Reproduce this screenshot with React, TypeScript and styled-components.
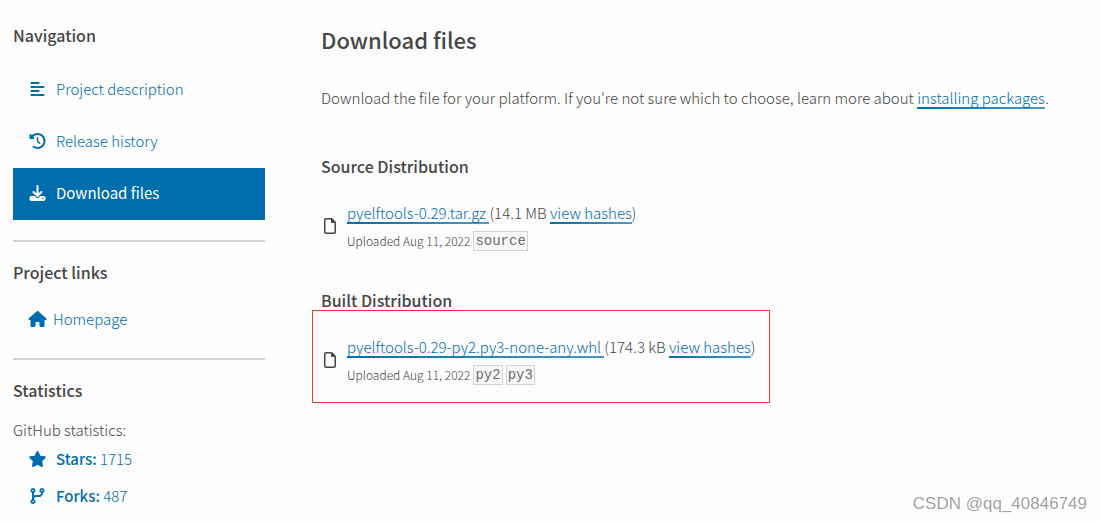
import React from "react";
import styled, { createGlobalStyle, css } from "styled-components";
import {
  FaAlignLeft,
  FaClockRotateLeft,
  FaCodeBranch,
  FaDownload,
  FaHouse,
  FaRegFile,
  FaStar,
} from "react-icons/fa6";

const blue = "#006dad";
const text = "#464646";
const rule = "#d3d3d3";

const GlobalStyle = createGlobalStyle`
  *, *::before, *::after { box-sizing: border-box; }
  body {
    margin: 0;
    background: #fdfdfd;
    color: ${text};
    font-family: "Noto Sans CJK SC", "Open Sans", sans-serif;
    font-size: 15px;
    font-weight: 300;
    line-height: 22px;
  }
  h1, h2, h3, p, ul { margin: 0; padding: 0; }
  ul { list-style: none; }
`;

const Page = styled.div`
  display: grid;
  grid-template-columns: 252px minmax(0, 1fr);
  column-gap: 56px;
  padding: 0 13px;
`;

const Sidebar = styled.aside`
  padding-top: 5px;
`;

const SidebarSection = styled.section`
  padding: 18px 0 20px;

  & + & {
    border-top: 2px solid ${rule};
  }
`;

const SidebarTitle = styled.h2`
  margin-bottom: 17px;
  font-size: 16px;
  font-weight: 500;
  line-height: 24px;
`;

const SidebarLink = styled.a<{ $tall?: boolean; $active?: boolean; $gap?: number }>`
  display: flex;
  align-items: center;
  gap: ${({ $gap = 9 }) => $gap}px;
  height: ${({ $tall }) => ($tall ? 52 : 37)}px;
  padding: 0 15px 2px;
  color: ${blue};
  text-decoration: none;

  svg {
    flex: none;
    width: 19px;
    height: 16px;
  }

  strong {
    font-weight: 500;
  }

  ${({ $active }) =>
    $active &&
    css`
      background: ${blue};
      color: #fff;
      font-weight: 400;
    `}
`;

const Main = styled.main`
  padding-top: 24px;
`;

const PageTitle = styled.h1`
  margin-bottom: 33px;
  font-size: 22px;
  font-weight: 500;
  line-height: 30px;
`;

const Intro = styled.p`
  margin-bottom: 47px;
`;

const TextLink = styled.a`
  padding-bottom: 1px;
  background: linear-gradient(to right, ${blue}, #4b9bc9) left bottom / 100% 2px no-repeat;
  color: ${blue};
  text-decoration: none;
  white-space: pre;
`;

const Distribution = styled.section`
  margin-bottom: 21px;
`;

const DistributionTitle = styled.h3`
  font-size: 16px;
  font-weight: 500;
  line-height: 20px;
`;

const FileRow = styled.div<{ $marked?: boolean }>`
  display: flex;
  align-items: center;
  gap: 9px;
  width: fit-content;
  margin-left: -9px;
  padding: 22px 14px 13px 9px;
  border: 1px solid ${({ $marked }) => ($marked ? "#f03c3c" : "transparent")};

  > svg {
    flex: none;
    width: 16px;
    height: 16px;
    margin-bottom: 2px;
  }
`;

const FileName = styled.div`
  line-height: 28px;
`;

const FileMeta = styled.div`
  display: flex;
  align-items: center;
  gap: 3px;
  height: 28px;
  font-size: 12px;
`;

const Tag = styled.code`
  padding: 0 1px;
  border: 1px solid ${rule};
  background: #f8f8f8;
  color: #6c6c6c;
  font-family: "Liberation Mono", monospace;
  font-size: 14px;
  font-weight: 400;
  line-height: 18px;
`;

const Watermark = styled.div`
  position: fixed;
  right: 14px;
  bottom: 6px;
  color: #a0a0a0;
  font-family: "Liberation Sans", sans-serif;
  font-size: 17px;
  font-weight: 400;
`;

interface DistributionFile {
  title: string;
  name: string;
  size: string;
  tags: string[];
  marked?: boolean;
}

const files: DistributionFile[] = [
  { title: "Source Distribution", name: "pyelftools-0.29.tar.gz", size: "14.1 MB", tags: ["source"] },
  {
    title: "Built Distribution",
    name: "pyelftools-0.29-py2.py3-none-any.whl",
    size: "174.3 kB",
    tags: ["py2", "py3"],
    marked: true,
  },
];

export default function App() {
  return (
    <>
      <GlobalStyle />
      <Page>
        <Sidebar>
          <SidebarSection>
            <SidebarTitle>Navigation</SidebarTitle>
            <nav aria-label="Project navigation">
              <SidebarLink href="#description" $tall>
                <FaAlignLeft />
                Project description
              </SidebarLink>
              <SidebarLink href="#history" $tall>
                <FaClockRotateLeft />
                Release history
              </SidebarLink>
              <SidebarLink href="#files" $tall $active aria-current="page">
                <FaDownload />
                Download files
              </SidebarLink>
            </nav>
          </SidebarSection>
          <SidebarSection>
            <SidebarTitle>Project links</SidebarTitle>
            <SidebarLink href="#homepage" $gap={6}>
              <FaHouse />
              Homepage
            </SidebarLink>
          </SidebarSection>
          <SidebarSection>
            <SidebarTitle>Statistics</SidebarTitle>
            <p>GitHub statistics:</p>
            <ul>
              <li>
                <SidebarLink href="#stars">
                  <FaStar />
                  <span>
                    <strong>Stars:</strong> 1715
                  </span>
                </SidebarLink>
              </li>
              <li>
                <SidebarLink href="#forks">
                  <FaCodeBranch />
                  <span>
                    <strong>Forks:</strong> 487
                  </span>
                </SidebarLink>
              </li>
            </ul>
          </SidebarSection>
        </Sidebar>
        <Main>
          <PageTitle>Download files</PageTitle>
          <Intro>
            Download the file for your platform. If you're not sure which to choose, learn more about{" "}
            <TextLink href="#installing">installing packages</TextLink>.
          </Intro>
          {files.map((file) => (
            <Distribution key={file.name}>
              <DistributionTitle>{file.title}</DistributionTitle>
              <FileRow $marked={file.marked}>
                <FaRegFile />
                <div>
                  <FileName>
                    <TextLink href="#download">{file.name + " "}</TextLink>({file.size}{" "}
                    <TextLink href="#hashes">view hashes</TextLink>)
                  </FileName>
                  <FileMeta>
                    Uploaded Aug 11, 2022
                    {file.tags.map((tag) => (
                      <Tag key={tag}>{tag}</Tag>
                    ))}
                  </FileMeta>
                </div>
              </FileRow>
            </Distribution>
          ))}
        </Main>
      </Page>
      <Watermark>CSDN @qq_40846749</Watermark>
    </>
  );
}
